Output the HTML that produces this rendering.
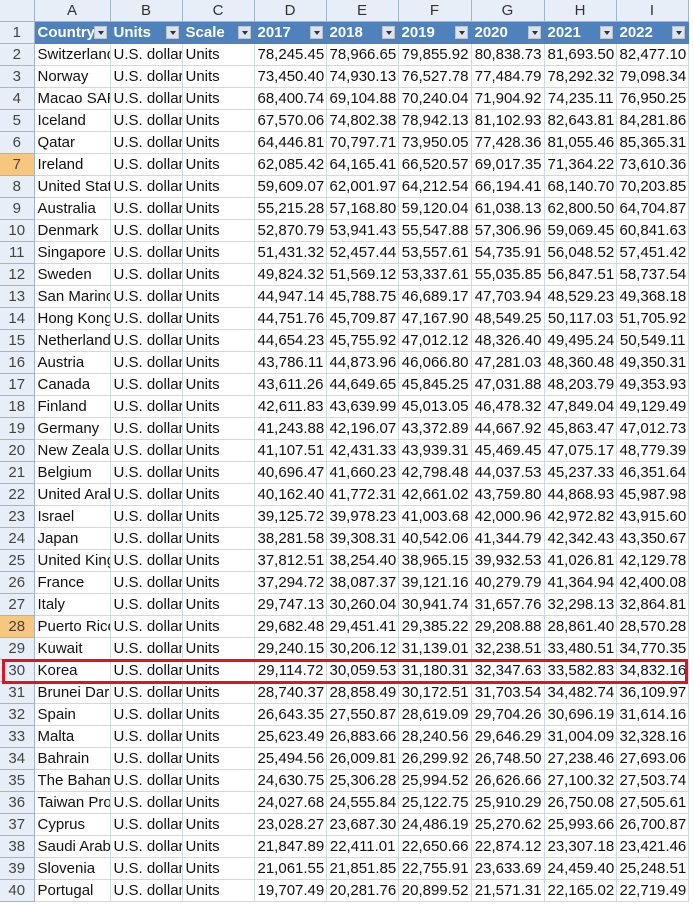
<!DOCTYPE html><html><head><meta charset="utf-8"><style>
body{margin:0;width:693px;height:907px;background:#fff;overflow:hidden;font-family:"Liberation Sans","Noto Sans CJK KR",sans-serif;position:relative}
table{border-collapse:collapse;table-layout:fixed;width:688px;font-size:15px;color:#111}
td{height:21px;padding:0 3px;border-right:1px solid #d0d7e5;border-bottom:1px solid #d0d7e5;white-space:nowrap;overflow:hidden;line-height:21px;text-overflow:clip}
td.n{text-align:right;padding-right:2px}
tr.h td{background:#e8eef7;text-align:center;color:#333;border-color:#9eb6ce}
td.r{background:#e8eef7;text-align:center;color:#444;border-color:#9eb6ce;padding:0}
td.o{background:#f7c77f}
tr.t td{background:#4f81bd;color:#fff;font-weight:bold;position:relative;border-color:#4f81bd}
tr.t td.r{background:#e8eef7;color:#444;font-weight:normal;border-color:#9eb6ce}
.dd{position:absolute;right:3px;top:4px;width:13px;height:13px;background:#dde4ee;border:1px solid #b8c4d4;box-sizing:border-box}
.dd:after{content:"";position:absolute;left:3px;top:4px;border-left:3px solid transparent;border-right:3px solid transparent;border-top:4px solid #333}
.red{position:absolute;left:2px;top:659px;width:680px;height:19px;border:3px solid #e0141c}
</style></head><body>
<table>
<colgroup><col style="width:34px"><col style="width:76px"><col style="width:72px"><col style="width:72px"><col style="width:72px"><col style="width:72px"><col style="width:73px"><col style="width:73px"><col style="width:72px"><col style="width:72px"></colgroup>
<tr class="h"><td style="background:#e8eef7"></td><td>A</td><td>B</td><td>C</td><td>D</td><td>E</td><td>F</td><td>G</td><td>H</td><td>I</td></tr>
<tr class="t"><td class="r">1</td><td>Country<span class="dd"></span></td><td>Units<span class="dd"></span></td><td>Scale<span class="dd"></span></td><td>2017<span class="dd"></span></td><td>2018<span class="dd"></span></td><td>2019<span class="dd"></span></td><td>2020<span class="dd"></span></td><td>2021<span class="dd"></span></td><td>2022<span class="dd"></span></td></tr>
<script>
var d=[["Switzerland","78,245.45","78,966.65","79,855.92","80,838.73","81,693.50","82,477.10"],
["Norway","73,450.40","74,930.13","76,527.78","77,484.79","78,292.32","79,098.34"],
["Macao SAR","68,400.74","69,104.88","70,240.04","71,904.92","74,235.11","76,950.25"],
["Iceland","67,570.06","74,802.38","78,942.13","81,102.93","82,643.81","84,281.86"],
["Qatar","64,446.81","70,797.71","73,950.05","77,428.36","81,055.46","85,365.31"],
["Ireland","62,085.42","64,165.41","66,520.57","69,017.35","71,364.22","73,610.36"],
["United States","59,609.07","62,001.97","64,212.54","66,194.41","68,140.70","70,203.85"],
["Australia","55,215.28","57,168.80","59,120.04","61,038.13","62,800.50","64,704.87"],
["Denmark","52,870.79","53,941.43","55,547.88","57,306.96","59,069.45","60,841.63"],
["Singapore","51,431.32","52,457.44","53,557.61","54,735.91","56,048.52","57,451.42"],
["Sweden","49,824.32","51,569.12","53,337.61","55,035.85","56,847.51","58,737.54"],
["San Marino","44,947.14","45,788.75","46,689.17","47,703.94","48,529.23","49,368.18"],
["Hong Kong","44,751.76","45,709.87","47,167.90","48,549.25","50,117.03","51,705.92"],
["Netherlands","44,654.23","45,755.92","47,012.12","48,326.40","49,495.24","50,549.11"],
["Austria","43,786.11","44,873.96","46,066.80","47,281.03","48,360.48","49,350.31"],
["Canada","43,611.26","44,649.65","45,845.25","47,031.88","48,203.79","49,353.93"],
["Finland","42,611.83","43,639.99","45,013.05","46,478.32","47,849.04","49,129.49"],
["Germany","41,243.88","42,196.07","43,372.89","44,667.92","45,863.47","47,012.73"],
["New Zealand","41,107.51","42,431.33","43,939.31","45,469.45","47,075.17","48,779.39"],
["Belgium","40,696.47","41,660.23","42,798.48","44,037.53","45,237.33","46,351.64"],
["United Arab","40,162.40","41,772.31","42,661.02","43,759.80","44,868.93","45,987.98"],
["Israel","39,125.72","39,978.23","41,003.68","42,000.96","42,972.82","43,915.60"],
["Japan","38,281.58","39,308.31","40,542.06","41,344.79","42,342.43","43,350.67"],
["United Kingdom","37,812.51","38,254.40","38,965.15","39,932.53","41,026.81","42,129.78"],
["France","37,294.72","38,087.37","39,121.16","40,279.79","41,364.94","42,400.08"],
["Italy","29,747.13","30,260.04","30,941.74","31,657.76","32,298.13","32,864.81"],
["Puerto Rico","29,682.48","29,451.41","29,385.22","29,208.88","28,861.40","28,570.28"],
["Kuwait","29,240.15","30,206.12","31,139.01","32,238.51","33,480.51","34,770.35"],
["Korea","29,114.72","30,059.53","31,180.31","32,347.63","33,582.83","34,832.16"],
["Brunei Darussalam","28,740.37","28,858.49","30,172.51","31,703.54","34,482.74","36,109.97"],
["Spain","26,643.35","27,550.87","28,619.09","29,704.26","30,696.19","31,614.16"],
["Malta","25,623.49","26,883.66","28,240.56","29,646.29","31,004.09","32,328.16"],
["Bahrain","25,494.56","26,009.81","26,299.92","26,748.50","27,238.46","27,693.06"],
["The Bahamas","24,630.75","25,306.28","25,994.52","26,626.66","27,100.32","27,503.74"],
["Taiwan Province","24,027.68","24,555.84","25,122.75","25,910.29","26,750.08","27,505.61"],
["Cyprus","23,028.27","23,687.30","24,486.19","25,270.62","25,993.66","26,700.87"],
["Saudi Arabia","21,847.89","22,411.01","22,650.66","22,874.12","23,307.18","23,421.46"],
["Slovenia","21,061.55","21,851.85","22,755.91","23,633.69","24,459.40","25,248.51"],
["Portugal","19,707.49","20,281.76","20,899.52","21,571.31","22,165.02","22,719.49"]];
for(var i=0;i<d.length;i++){var r=d[i],n=i+2;var s='<tr><td class="r'+((n==7||n==28)?' o':'')+'">'+n+'</td><td>'+r[0]+'</td><td>U.S. dollars</td><td>Units</td>';for(var j=1;j<7;j++)s+='<td class="n">'+r[j]+'</td>';document.write(s+'</tr>');}
</script>
</table>
<div class="red"></div>
</body></html>
